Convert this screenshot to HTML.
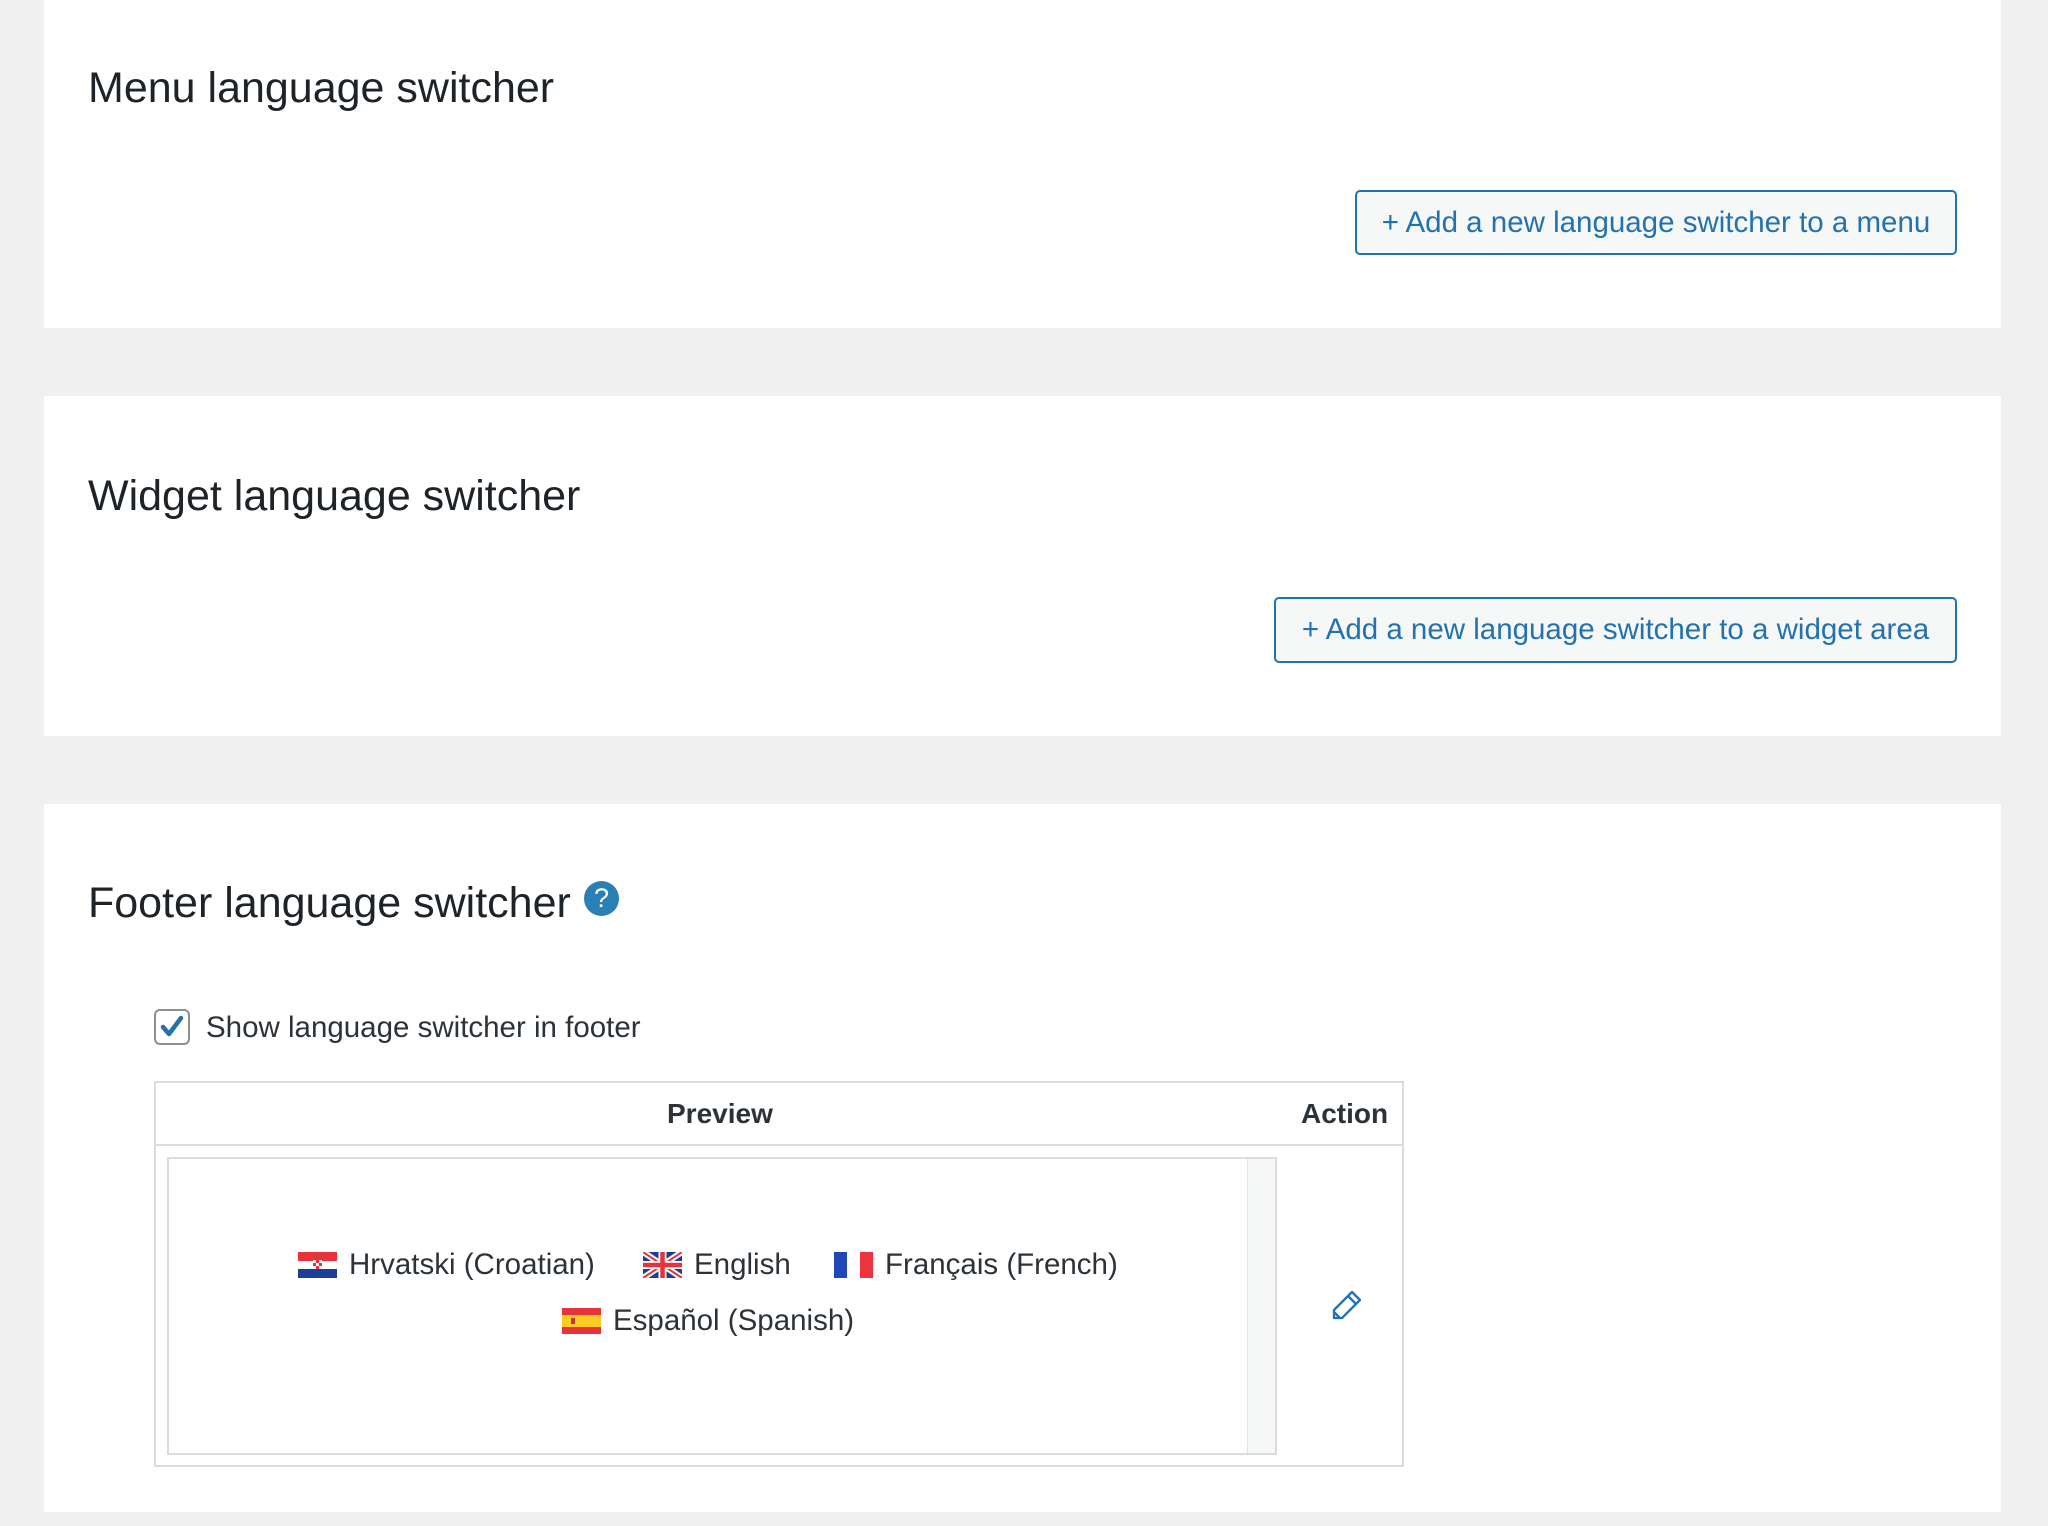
<!DOCTYPE html>
<html><head><meta charset="utf-8"><style>
*{box-sizing:border-box;margin:0;padding:0}
body{width:2048px;height:1526px;background:#f0f0f1;position:relative;overflow:hidden;font-family:"Liberation Sans",sans-serif;color:#1d2327}
.card{position:absolute;left:44px;width:1957px;background:#fff}
h2{position:absolute;left:88px;font-weight:400;font-size:43px;color:#1d2327;white-space:nowrap;line-height:1}
.btn{position:absolute;border:2px solid #2271b1;border-radius:5px;background:#f6f7f7;color:#2271b1;font-size:29.5px;display:flex;align-items:center;justify-content:center;white-space:nowrap}
.abs{position:absolute;white-space:nowrap}
.lang{position:absolute;font-size:29.5px;color:#2c3338;line-height:1;white-space:nowrap}
</style></head><body>
<div class="card" style="top:0;height:328px"></div>
<div class="card" style="top:396px;height:340px"></div>
<div class="card" style="top:804px;height:708px"></div>

<h2 style="top:67px">Menu language switcher</h2>
<div class="btn" style="left:1355px;top:190px;width:602px;height:65px">+ Add a new language switcher to a menu</div>

<h2 style="top:475px">Widget language switcher</h2>
<div class="btn" style="left:1274px;top:597px;width:683px;height:66px">+ Add a new language switcher to a widget area</div>

<h2 style="top:882px">Footer language switcher</h2>
<div class="abs" style="left:584px;top:881px;width:35px;height:35px;border-radius:50%;background:#2a7fb4;color:#fff;font-size:27px;text-align:center;line-height:35px">?</div>

<div class="abs" style="left:154px;top:1009px;width:36px;height:36px;border:2px solid #8c8f94;border-radius:6px;background:#fff">
<svg width="32" height="32" viewBox="0 0 32 32" style="position:absolute;left:0;top:0"><path d="M7 16 L13 23 L25 7" fill="none" stroke="#2271b1" stroke-width="4.5" stroke-linecap="round" stroke-linejoin="round"/></svg></div>
<div class="abs" style="left:206px;top:1011px;font-size:29.5px;color:#2c3338">Show language switcher in footer</div>

<div class="abs" style="left:154px;top:1081px;width:1250px;height:386px;border:2px solid #dcdcde"></div>
<div class="abs" style="left:156px;top:1144px;width:1246px;height:2px;background:#dcdcde"></div>
<div class="abs" style="left:667px;top:1098px;font-size:28px;font-weight:bold;color:#2c3338">Preview</div>
<div class="abs" style="left:1301px;top:1098px;font-size:28px;font-weight:bold;color:#2c3338">Action</div>
<div class="abs" style="left:167px;top:1157px;width:1110px;height:298px;border:2px solid #dcdcde;background:#fff"></div>
<div class="abs" style="left:1247px;top:1159px;width:28px;height:294px;background:#f6f7f7;border-left:1px solid #e4e4e6"></div>

<svg class="abs" style="left:298px;top:1252px" width="39" height="26" viewBox="0 0 39 26"><rect width="39" height="9" fill="#e8323c"/><rect y="9" width="39" height="8" fill="#fff"/><rect y="17" width="39" height="9" fill="#1b3f94"/><rect x="15" y="6" width="9" height="11" fill="#e8323c"/><path d="M15 8h3v3h-3zM21 8h3v3h-3zM18 11h3v3h-3zM15 14h3v3h-3zM21 14h3v3h-3z" fill="#fff"/></svg>
<div class="lang" style="left:349px;top:1250px">Hrvatski (Croatian)</div>
<svg class="abs" style="left:643px;top:1252px" width="39" height="26" viewBox="0 0 39 26"><rect width="39" height="26" fill="#1d3f91"/><path d="M0 0L39 26M39 0L0 26" stroke="#fff" stroke-width="6"/><path d="M0 0L39 26M39 0L0 26" stroke="#e8323c" stroke-width="2"/><path d="M19.5 0V26M0 13H39" stroke="#fff" stroke-width="8"/><path d="M19.5 0V26M0 13H39" stroke="#e8323c" stroke-width="4.5"/></svg>
<div class="lang" style="left:694px;top:1250px">English</div>
<svg class="abs" style="left:834px;top:1252px" width="39" height="26" viewBox="0 0 39 26"><rect width="13" height="26" fill="#1f47b5"/><rect x="13" width="13" height="26" fill="#fff"/><rect x="26" width="13" height="26" fill="#ee3340"/></svg>
<div class="lang" style="left:885px;top:1250px">Français (French)</div>
<svg class="abs" style="left:562px;top:1308px" width="39" height="26" viewBox="0 0 39 26"><rect width="39" height="26" fill="#e8323c"/><rect y="7" width="39" height="12" fill="#fbcd23"/><rect x="9" y="10" width="4" height="6" fill="#c8323c"/></svg>
<div class="lang" style="left:613px;top:1306px">Español (Spanish)</div>

<svg class="abs" style="left:1330px;top:1288px" width="34" height="34" viewBox="0 0 34 34"><path d="M22 4 L30 12 L12 30 L4 30 L4 22 Z M18 8 L26 16 M4 24 L10 30" fill="none" stroke="#2271b1" stroke-width="2.3" stroke-linejoin="round"/></svg>
</body></html>
